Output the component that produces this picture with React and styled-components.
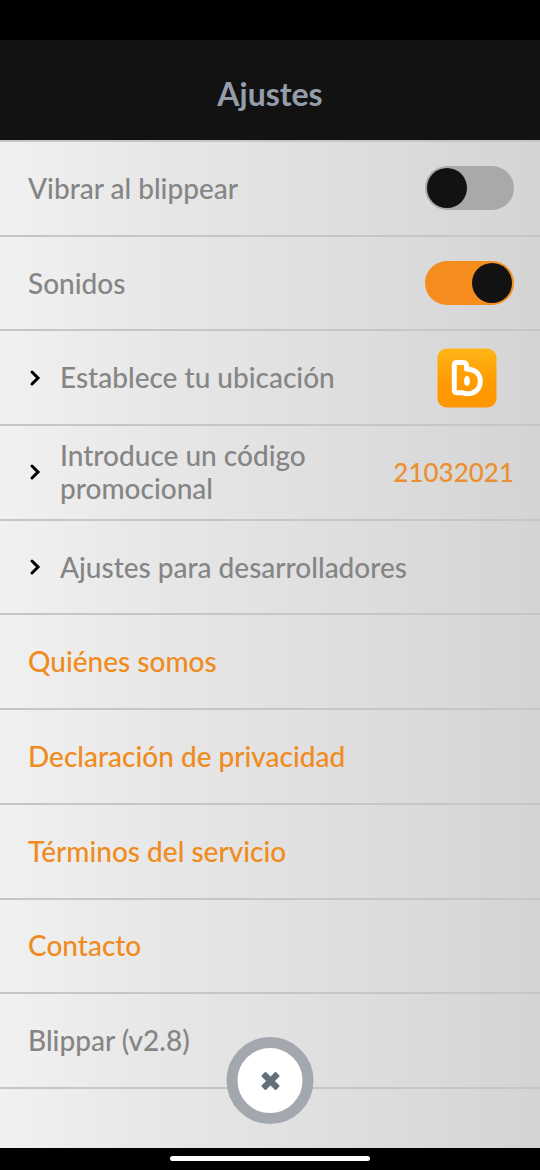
import React, { useState } from "react";
import styled, { createGlobalStyle } from "styled-components";

const GlobalStyle = createGlobalStyle`
  *, *::before, *::after { box-sizing: border-box; }
  body {
    margin: 0;
    background: #000;
    font-family: Lato, "Noto Sans", sans-serif;
  }
`;

const Page = styled.div`
  min-height: 100vh;
  display: flex;
  flex-direction: column;
  padding-top: 40px;
`;

const Header = styled.header`
  height: 100px;
  display: flex;
  align-items: center;
  justify-content: center;
  padding-top: 8px;
  background: #121212;
`;

const Title = styled.h1`
  margin: 0;
  font-size: 32px;
  line-height: 40px;
  font-weight: 700;
  color: #949daa;
`;

const Panel = styled.main`
  flex: 1;
  display: flex;
  flex-direction: column;
  padding-bottom: 59px;
  background: linear-gradient(to right, #f1f1f1 0%, #e7e7e7 30%, #dedede 65%, #d4d4d4 100%);
`;

const List = styled.ul`
  flex: 1;
  margin: 0;
  padding: 0;
  list-style: none;
  display: grid;
  grid-auto-rows: minmax(min-content, 1fr);
  border-top: 2px solid #c6c6c6;
`;

const Row = styled.li`
  display: flex;
  align-items: center;
  justify-content: space-between;
  gap: 24px;
  padding: 12px 26px 12px 28px;
  border-bottom: 2px solid #c6c6c6;
  font-size: 28px;
  line-height: 33px;
  font-weight: 500;
  color: #858585;
`;

const RowButton = styled.button`
  display: flex;
  align-items: center;
  gap: 18px;
  padding: 0;
  border: 0;
  background: none;
  font: inherit;
  color: inherit;
  text-align: left;
  cursor: pointer;
`;

const Chevron = styled.svg`
  width: 14px;
  height: 18px;
  flex: none;
`;

const RowLink = styled.a`
  color: #f08b20;
  text-decoration: none;
`;

const Code = styled.output`
  font-size: 26px;
  color: #ec8f30;
`;

const Switch = styled.input`
  appearance: none;
  margin: 0;
  flex: none;
  width: 89px;
  height: 44px;
  padding: 2px;
  border-radius: 22px;
  background: #a9a9a9;
  display: flex;
  cursor: pointer;

  &::before {
    content: "";
    width: 40px;
    height: 40px;
    border-radius: 50%;
    background: #121212;
  }

  &:checked {
    background: #f48c1e;
    justify-content: flex-end;
  }
`;

const Logo = styled.svg`
  width: 60px;
  height: 60px;
  margin-right: 17px;
  flex: none;
`;

const CloseButton = styled.button`
  position: fixed;
  left: 50%;
  bottom: 46px;
  transform: translateX(-50%);
  width: 87px;
  height: 87px;
  padding: 0;
  display: flex;
  align-items: center;
  justify-content: center;
  border: 11px solid #a2a8ae;
  border-radius: 50%;
  background: #fff;
  cursor: pointer;
`;

const HomeBar = styled.footer`
  height: 22px;
  padding-bottom: 1px;
  display: flex;
  align-items: center;
  justify-content: center;
`;

const HomeHandle = styled.span`
  width: 200px;
  height: 5px;
  border-radius: 3px;
  background: #fff;
`;

function ToggleRow({ id, label, initial }) {
  const [on, setOn] = useState(initial);
  return (
    <Row>
      <label htmlFor={id}>{label}</label>
      <Switch id={id} type="checkbox" checked={on} onChange={() => setOn(!on)} />
    </Row>
  );
}

function ActionRow({ label, children }) {
  return (
    <Row>
      <RowButton type="button">
        <Chevron viewBox="0 0 14 18" fill="none" stroke="#000" strokeWidth="3" strokeLinecap="round" strokeLinejoin="miter" aria-hidden="true">
          <path d="M4 3l6 6-6 6" />
        </Chevron>
        {label}
      </RowButton>
      {children}
    </Row>
  );
}

function BlipparLogo() {
  return (
    <Logo viewBox="0 0 60 60" role="img" aria-label="Blippar">
      <defs>
        <linearGradient id="logoFill" x1="0" y1="0" x2="0" y2="1">
          <stop offset="0" stopColor="#ffb516" />
          <stop offset="0.6" stopColor="#ff9a00" />
          <stop offset="1" stopColor="#ff9600" />
        </linearGradient>
      </defs>
      <rect x="0.5" y="0.5" width="59" height="59" rx="9" fill="url(#logoFill)" />
      <path
        d="M20 14.500h6q3.500 0 3.500 3.500v3c8 0 13.800 4.500 13.800 12.200s-5.300 12.500-13 12.500q-2.500 0-4.800-1h-5.500q-2.700 0-2.700-2.700v-24.800q0-2.700 2.700-2.700z"
        fill="none"
        stroke="#fff"
        strokeWidth="5"
        strokeLinejoin="round"
      />
      <ellipse cx="30" cy="33" rx="3" ry="5" fill="#fff" />
    </Logo>
  );
}

const links = ["Quiénes somos", "Declaración de privacidad", "Términos del servicio", "Contacto"];

export default function App() {
  return (
    <>
      <GlobalStyle />
      <Page>
        <Header>
          <Title>Ajustes</Title>
        </Header>
        <Panel>
          <List>
            <ToggleRow id="vibrate" label="Vibrar al blippear" initial={false} />
            <ToggleRow id="sounds" label="Sonidos" initial />
            <ActionRow label="Establece tu ubicación">
              <BlipparLogo />
            </ActionRow>
            <ActionRow label="Introduce un código promocional">
              <Code>21032021</Code>
            </ActionRow>
            <ActionRow label="Ajustes para desarrolladores" />
            {links.map((text) => (
              <Row key={text}>
                <RowLink href="#">{text}</RowLink>
              </Row>
            ))}
            <Row>Blippar (v2.8)</Row>
          </List>
        </Panel>
        <HomeBar>
          <HomeHandle />
        </HomeBar>
        <CloseButton type="button" aria-label="Cerrar">
          <svg width="20" height="20" viewBox="0 0 20 20" fill="#62707b" stroke="#62707b" strokeWidth="2" strokeLinejoin="round" aria-hidden="true">
            <path d="M5 2l5 5 5-5 3 3-5 5 5 5-3 3-5-5-5 5-3-3 5-5-5-5z" />
          </svg>
        </CloseButton>
      </Page>
    </>
  );
}
